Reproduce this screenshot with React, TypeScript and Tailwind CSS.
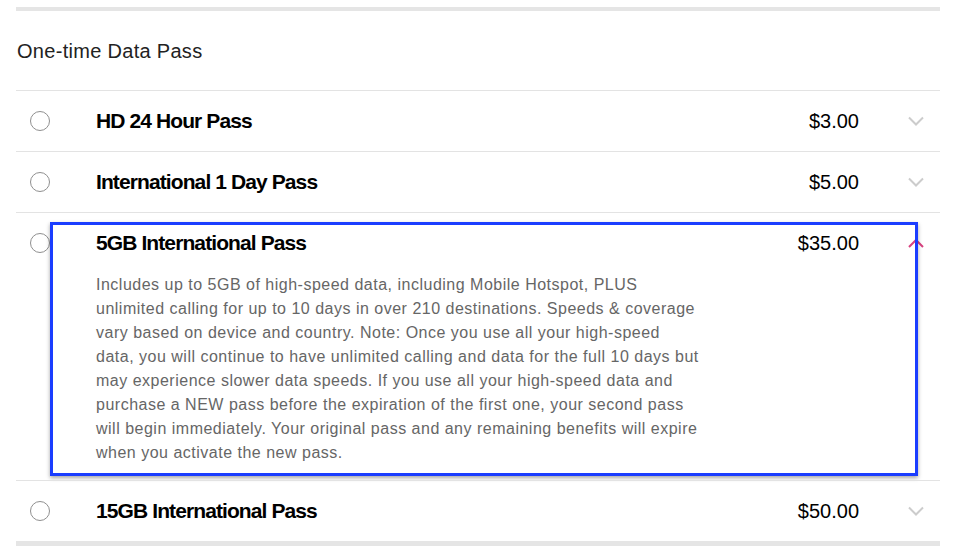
import React, { useState } from 'react';

type Pass = {
  id: string;
  name: string;
  price: string;
  details?: string;
};

const passes: Pass[] = [
  { id: 'hd24', name: 'HD 24 Hour Pass', price: '$3.00' },
  { id: 'intl1', name: 'International 1 Day Pass', price: '$5.00' },
  {
    id: 'intl5',
    name: '5GB International Pass',
    price: '$35.00',
    details:
      'Includes up to 5GB of high-speed data, including Mobile Hotspot, PLUS unlimited calling for up to 10 days in over 210 destinations. Speeds & coverage vary based on device and country. Note: Once you use all your high-speed data, you will continue to have unlimited calling and data for the full 10 days but may experience slower data speeds. If you use all your high-speed data and purchase a NEW pass before the expiration of the first one, your second pass will begin immediately. Your original pass and any remaining benefits will expire when you activate the new pass.',
  },
  { id: 'intl15', name: '15GB International Pass', price: '$50.00' },
];

const Chevron: React.FC<{ open: boolean }> = ({ open }) => (
  <svg
    aria-hidden="true"
    className={open ? 'w-4 h-[10px] text-[#d8427f]' : 'w-4 h-[10px] text-[#cccccc]'}
    viewBox="0 0 16 10"
    fill="none"
    stroke="currentColor"
    strokeWidth={2}
  >
    {open ? <path d="M1 9l7-7l7 7" /> : <path d="M1 1.5l7 7l7-7" />}
  </svg>
);

const PassRow: React.FC<{ pass: Pass; open: boolean; onToggle: () => void }> = ({ pass, open, onToggle }) => (
  <div className="relative border-t border-[#e3e3e3]">
    <button type="button" onClick={onToggle} className="flex items-center w-full h-[60px] pl-[14px] pr-4 text-left">
      <span className="w-5 h-5 rounded-full border border-[#8f8f8f] shrink-0" />
      <span className="ml-[46px] flex-1 text-[21px] font-bold tracking-[-0.9px] text-black">{pass.name}</span>
      <span className="text-[20px] text-black">{pass.price}</span>
      <span className="ml-[49px] flex items-center">
        <Chevron open={open} />
      </span>
    </button>
    {open && pass.details && (
      <>
        <p className="pl-20 pb-[15px] w-[684px] text-[16px] leading-6 text-[#666666] tracking-[0.5px]">{pass.details}</p>
        <div className="pointer-events-none absolute top-[9px] left-[34px] right-[22px] bottom-[4px] border-[3px] border-[#1a3dff] shadow-[0_2px_4px_rgba(0,0,0,0.35)]" />
      </>
    )}
  </div>
);

export default function App() {
  const [openId, setOpenId] = useState('intl5');

  return (
    <div className="w-[969px] h-[547px] bg-white pt-[7px] pl-4 pr-[29px] font-['Liberation_Sans',Arial,sans-serif] overflow-hidden">
      <div className="h-1 bg-[#e5e5e5]" />
      <h2 className="h-[79px] flex items-center pl-px text-[20px] tracking-[0.3px] text-[#222222]">One-time Data Pass</h2>
      {passes.map((pass) => (
        <PassRow
          key={pass.id}
          pass={pass}
          open={openId === pass.id}
          onToggle={() => setOpenId(openId === pass.id ? '' : pass.id)}
        />
      ))}
      <div className="h-[5px] bg-[#e5e5e5]" />
    </div>
  );
}
